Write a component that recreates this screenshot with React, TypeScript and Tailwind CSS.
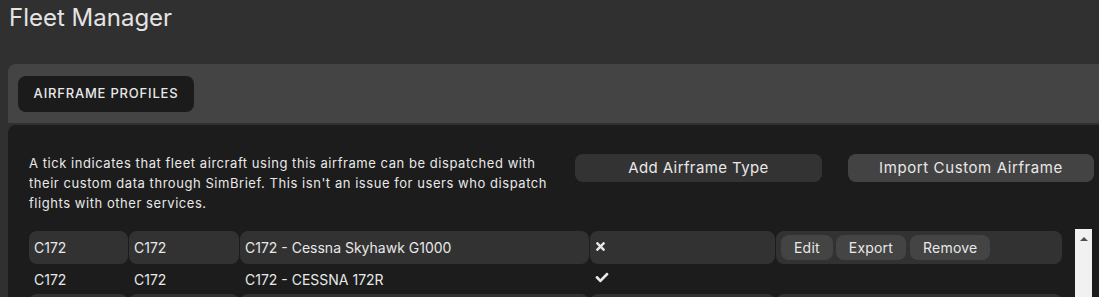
import { FaCheck, FaTimes } from "react-icons/fa";

interface Airframe {
  icao: string;
  type: string;
  name: string;
  simbrief: boolean;
  editable: boolean;
}

const rows: Airframe[] = [
  { icao: "C172", type: "C172", name: "C172 - Cessna Skyhawk G1000", simbrief: false, editable: true },
  { icao: "C172", type: "C172", name: "C172 - CESSNA 172R", simbrief: true, editable: false },
  { icao: "C208", type: "C208", name: "C208 - Cessna Grand Caravan", simbrief: false, editable: true },
];

const cell = "flex items-center pl-[5px] rounded-[8px]";
const action = "h-[25px] px-[13px] rounded-[8px] bg-[#444444] text-[14px] tracking-[0.2px]";

const Row = ({ row, shaded }: { row: Airframe; shaded: boolean }) => {
  const bg = shaded ? "bg-[#323232]" : "";
  return (
    <div className={`flex gap-[1px] ${shaded ? "h-[33px]" : "h-[28px]"} mb-[1px]`}>
      <div className={`${cell} ${bg} w-[99px]`}>{row.icao}</div>
      <div className={`${cell} ${bg} w-[110px]`}>{row.type}</div>
      <div className={`${cell} ${bg} w-[349px]`}>{row.name}</div>
      <div className={`${cell} ${bg} w-[185px] pb-[3px]`}>
        {row.simbrief ? <FaCheck className="w-[14px] h-[13px]" /> : <FaTimes className="w-[11px] h-[13px]" />}
      </div>
      <div className={`${cell} ${bg} w-[286px] pl-[4px] gap-[3px]`}>
        {row.editable && (
          <>
            <button className={action}>Edit</button>
            <button className={action}>Export</button>
            <button className={`${action} ml-[1px]`}>Remove</button>
          </>
        )}
      </div>
    </div>
  );
};

export default function App() {
  return (
    <div className="h-[297px] overflow-hidden bg-[#303030] text-[#e8e8e8] font-['Inter','Liberation_Sans',sans-serif]">
      <h1 className="pl-[9px] pt-[3px] text-[24px] leading-[30px] text-[#e4e4e4]">Fleet Manager</h1>

      <div className="ml-[8px] mt-[31px] h-[59px] bg-[#444444] rounded-tl-[8px] flex items-center pl-[10px]">
        <button className="h-[36px] w-[176px] rounded-[8px] bg-[#1b1b1b] text-[13px] font-medium tracking-[0.8px]">
          AIRFRAME PROFILES
        </button>
      </div>

      <div className="ml-[8px] mt-[2px] h-[200px] bg-[#1c1c1c] rounded-tl-[8px] pl-[21px] pt-[28px]">
        <div className="flex items-start">
          <p className="w-[546px] text-[13px] leading-[20px] tracking-[0.55px] pr-[22px]">
            A tick indicates that fleet aircraft using this airframe can be dispatched with their custom data
            through SimBrief. This isn't an issue for users who dispatch flights with other services.
          </p>
          <button className="mt-[1px] w-[247px] h-[28px] rounded-[8px] bg-[#333333] text-[15px] tracking-[0.4px]">
            Add Airframe Type
          </button>
          <button className="mt-[1px] ml-[26px] w-[246px] h-[28px] rounded-[8px] bg-[#434343] text-[15px] tracking-[0.6px]">
            Import Custom Airframe
          </button>
        </div>

        <div className="mt-[16px] flex">
          <div className="pt-[2px] text-[14px]">
            {rows.map((r, i) => (
              <Row key={i} row={r} shaded={i % 2 === 0} />
            ))}
          </div>
          <div className="ml-[13px] w-[17px] h-[80px] bg-[#f1f1f1] flex justify-center pt-[8px]">
            <div className="w-0 h-0 border-x-[4px] border-x-transparent border-b-[4px] border-b-[#505050]" />
          </div>
        </div>
      </div>
    </div>
  );
}
